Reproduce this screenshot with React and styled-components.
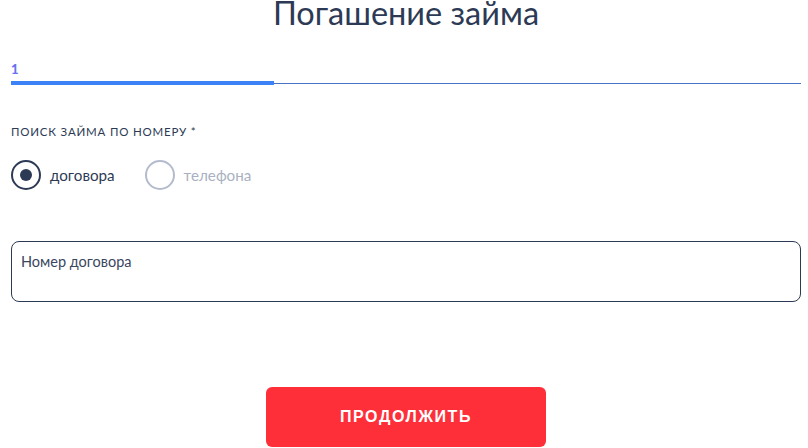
import styled, { createGlobalStyle } from 'styled-components';

const GlobalStyle = createGlobalStyle`
  body {
    margin: 0;
    background: #fff;
    font-family: 'Lato', 'Noto Sans', sans-serif;
    color: #2d3a55;
  }
`;

const Page = styled.div`
  width: 790px;
  margin-left: 11px;
  height: 448px;
  overflow: hidden;
  display: flex;
  flex-direction: column;
`;

const Title = styled.h1`
  margin: 0;
  font-size: 32.5px;
  font-weight: 400;
  line-height: 26px;
  text-align: center;
  color: #2d3a55;
`;

const Steps = styled.div`
  margin-top: 32px;
  position: relative;
  height: 25px;
  border-bottom: 1px solid #4a72c4;
`;

const StepNum = styled.span`
  font-size: 13px;
  font-weight: 900;
  color: #6a72ef;
  line-height: 14px;
  display: block;
  padding-top: 4px;
`;

const Progress = styled.div`
  position: absolute;
  left: 0;
  bottom: -2px;
  height: 4px;
  width: ${(p) => p.$pct}%;
  background: #3b82f6;
`;

const Label = styled.div`
  margin-top: 41px;
  font-size: 11.5px;
  letter-spacing: 0.8px;
  text-transform: uppercase;
  color: #2d3a55;
`;

const Radios = styled.div`
  margin-top: 22px;
  display: flex;
  gap: 30px;
`;

const Radio = styled.label`
  display: flex;
  align-items: center;
  gap: 9px;
  font-size: 15.2px;
  color: ${(p) => (p.$active ? '#2d3a55' : '#a9b1c2')};
`;

const Circle = styled.span`
  width: 30px;
  height: 30px;
  box-sizing: border-box;
  border-radius: 50%;
  border: 2px solid ${(p) => (p.$active ? '#2d3a55' : '#b3bbcc')};
  display: flex;
  align-items: center;
  justify-content: center;
  &::after {
    content: '';
    width: 12px;
    height: 12px;
    border-radius: 50%;
    background: #2d3a55;
    display: ${(p) => (p.$active ? 'block' : 'none')};
  }
`;

const Field = styled.div`
  margin-top: 51px;
  height: 61px;
  box-sizing: border-box;
  border: 1px solid #2d3a55;
  border-radius: 8px;
  padding: 11px 9px;
  font-size: 14.5px;
  color: #3a4660;
`;

const Button = styled.button`
  margin: 85px auto 0;
  width: 280px;
  height: 60px;
  flex-shrink: 0;
  border: none;
  border-radius: 6px;
  background: #ff2f3a;
  color: #fff;
  font-family: 'Liberation Sans', Arial, sans-serif;
  font-size: 16px;
  font-weight: 700;
  letter-spacing: 1.6px;
  cursor: pointer;
`;

const App = () => {
  return (
    <>
      <GlobalStyle />
      <Page>
        <Title>Погашение займа</Title>
        <Steps>
          <StepNum>1</StepNum>
          <Progress $pct={33.3} />
        </Steps>
        <Label>Поиск займа по номеру *</Label>
        <Radios>
          <Radio $active>
            <Circle $active />
            договора
          </Radio>
          <Radio>
            <Circle />
            телефона
          </Radio>
        </Radios>
        <Field>Номер договора</Field>
        <Button>ПРОДОЛЖИТЬ</Button>
      </Page>
    </>
  );
};

export default App;
